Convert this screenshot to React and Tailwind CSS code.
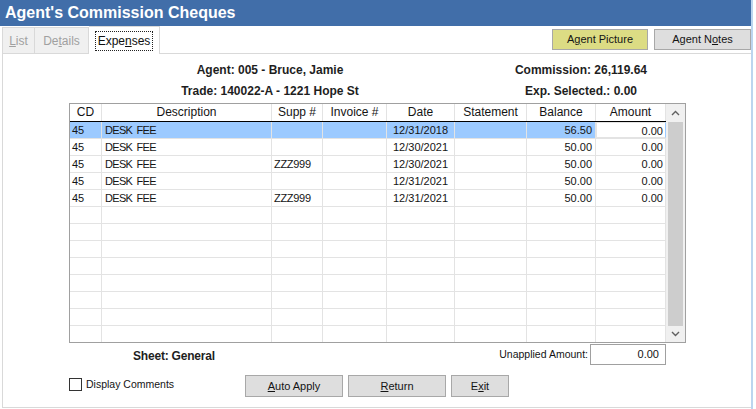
import React from "react";

const cols = [
  { key: "cd", label: "CD", w: "w-[32px]", align: "text-left pl-[2px]" },
  { key: "desc", label: "Description", w: "w-[170px]", align: "text-left pl-[3px] tracking-[-0.7px] [word-spacing:2px]" },
  { key: "supp", label: "Supp #", w: "w-[51px]", align: "text-left pl-[2px] tracking-[-0.3px]" },
  { key: "inv", label: "Invoice #", w: "w-[64px]", align: "text-left pl-[2px]" },
  { key: "date", label: "Date", w: "w-[68px]", align: "text-center" },
  { key: "stmt", label: "Statement", w: "w-[72px]", align: "text-left pl-[2px]" },
  { key: "bal", label: "Balance", w: "w-[69px]", align: "text-right pr-[3px]" },
  { key: "amt", label: "Amount", w: "w-[70px]", align: "text-right pr-[2px]" },
];

const data = [
  { cd: "45", desc: "DESK FEE", supp: "", inv: "", date: "12/31/2018", stmt: "", bal: "56.50", amt: "0.00" },
  { cd: "45", desc: "DESK FEE", supp: "", inv: "", date: "12/30/2021", stmt: "", bal: "50.00", amt: "0.00" },
  { cd: "45", desc: "DESK FEE", supp: "ZZZ999", inv: "", date: "12/30/2021", stmt: "", bal: "50.00", amt: "0.00" },
  { cd: "45", desc: "DESK FEE", supp: "", inv: "", date: "12/31/2021", stmt: "", bal: "50.00", amt: "0.00" },
  { cd: "45", desc: "DESK FEE", supp: "ZZZ999", inv: "", date: "12/31/2021", stmt: "", bal: "50.00", amt: "0.00" },
];

const rows = Array.from({ length: 13 }, (_, i) => data[i] || null);

function Chevron({ down }) {
  return (
    <svg width="9" height="6" viewBox="0 0 9 6" className="block">
      <path
        d={down ? "M1 1 L4.5 4.5 L8 1" : "M1 5 L4.5 1.5 L8 5"}
        fill="none"
        stroke="#606060"
        strokeWidth="1.4"
      />
    </svg>
  );
}

export default function App() {
  return (
    <div className="w-[756px] h-[409px] bg-white flex font-['Liberation_Sans',Arial,sans-serif] text-[#141414] overflow-hidden">
      <div className="w-[751px] flex flex-col">
        {/* Title bar */}
        <div className="h-[26px] bg-[#416ea9] flex items-center pl-[5px] shrink-0">
          <span className="text-white font-bold text-[16px] leading-none">Agent's Commission Cheques</span>
        </div>

        {/* Tab row */}
        <div className="h-[27px] flex items-end pl-[2px] shrink-0 relative z-10">
          <div className="h-[26px] w-[33px] bg-[#f0f0f0] border border-b-0 border-[#d9d9d9] flex items-center justify-center text-[12px] text-[#a0a0a0]">
            <span><span className="underline">L</span>ist</span>
          </div>
          <div className="h-[26px] w-[54px] bg-[#f0f0f0] border border-b-0 border-l-0 border-[#d9d9d9] flex items-center justify-center text-[12px] text-[#a0a0a0]">
            <span>De<span className="underline">t</span>ails</span>
          </div>
          <div className="h-[28px] w-[71px] -mb-px bg-white border border-b-0 border-l-0 border-[#d9d9d9] flex items-center justify-center text-[12px] text-[#101010] self-end">
            <span className="outline outline-1 outline-dotted outline-[#222] px-[2px] py-[2px] leading-[14px]">
              Expe<span className="underline">n</span>ses
            </span>
          </div>
          <div className="ml-auto self-start mt-[3px] flex gap-[6px] text-[11px]">
            <div className="w-[96px] h-[21px] bg-[#dcdc84] border border-[#a8a8a8] flex items-center justify-center">
              <span>A<span className="underline">g</span>ent Picture</span>
            </div>
            <div className="w-[97px] h-[21px] bg-[#dedede] border border-[#a8a8a8] flex items-center justify-center">
              <span>Agent N<span className="underline">o</span>tes</span>
            </div>
          </div>
        </div>

        {/* Panel */}
        <div className="flex-1 ml-[2px] mb-[1px] border border-r-0 border-[#d9d9d9] flex flex-col">
          {/* Info */}
          <div className="pt-[5px] pl-[66px] flex text-[12px] font-bold text-[#1e1e1e]">
            <div className="w-[402px] flex flex-col items-center">
              <div className="h-[21px] flex items-center">Agent: 005 - Bruce, Jamie</div>
              <div className="h-[21px] flex items-center">Trade: 140022-A - 1221 Hope St</div>
            </div>
            <div className="w-[220px] flex flex-col items-center">
              <div className="h-[21px] flex items-center">Commission: 26,119.64</div>
              <div className="h-[21px] flex items-center">Exp. Selected.: 0.00</div>
            </div>
          </div>

          {/* Table */}
          <div className="ml-[66px] mt-[2px] w-[617px] border border-[#a0a0a0] flex">
            <div className="w-[596px] flex flex-col">
              <div className="h-[18px] flex border-b border-[#000]">
                {cols.map((c) => (
                  <div
                    key={c.key}
                    className={`${c.w} h-[17px] border-r border-[#e3e3e3] text-[12px] leading-[17px] text-center`}
                  >
                    {c.label}
                  </div>
                ))}
              </div>
              {rows.map((r, i) => {
                const sel = i === 0;
                return (
                  <div
                    key={i}
                    className={`h-[17px] flex border-b border-[#e3e3e3] last:border-b-0 last:h-[16px] ${sel ? "bg-[#9ccaff]" : ""}`}
                  >
                    {cols.map((c) => {
                      const isAmtSel = sel && c.key === "amt";
                      return (
                        <div
                          key={c.key}
                          className={`${c.w} h-full border-r border-[#e3e3e3] text-[11px] leading-[16px] whitespace-nowrap overflow-hidden ${c.align} ${isAmtSel ? "bg-white border border-[#9ccaff] border-r-[#9ccaff]" : ""}`}
                        >
                          {r ? r[c.key] : ""}
                        </div>
                      );
                    })}
                  </div>
                );
              })}
            </div>
            {/* Scrollbar */}
            <div className="w-[19px] bg-[#f0f0f0] flex flex-col items-center">
              <div className="h-[18px] w-full flex items-center justify-center">
                <Chevron />
              </div>
              <div className="flex-1 w-[15px] bg-[#cdcdcd]" />
              <div className="h-[16px] w-full flex items-center justify-center">
                <Chevron down />
              </div>
            </div>
          </div>

          {/* Sheet / Unapplied */}
          <div className="ml-[66px] mt-[1px] w-[617px] h-[21px] flex items-center">
            <div className="pl-[64px] font-bold text-[12px] tracking-[-0.2px] text-[#1e1e1e] mt-[2px]">Sheet: General</div>
            <div className="ml-auto text-[10.5px]">Unapplied Amount:</div>
            <div className="ml-[2px] mr-[20px] w-[76px] h-[21px] border border-[#a0a0a0] flex items-center justify-end pr-[6px] text-[11px]">
              0.00
            </div>
          </div>

          {/* Bottom row */}
          <div className="ml-[66px] mt-[10px] flex items-start text-[11px]">
            <div className="w-[176px] flex items-center mt-[2px] gap-[4px]">
              <div className="w-[13px] h-[13px] border border-[#333] bg-white" />
              <span className="text-[10.5px]">Display Comments</span>
            </div>
            <div className="flex gap-[5px]">
              <div className="w-[98px] h-[22px] bg-[#dedede] border border-[#a8a8a8] flex items-center justify-center">
                <span><span className="underline">A</span>uto Apply</span>
              </div>
              <div className="w-[98px] h-[22px] bg-[#dedede] border border-[#a8a8a8] flex items-center justify-center">
                <span><span className="underline">R</span>eturn</span>
              </div>
              <div className="w-[58px] h-[22px] bg-[#dedede] border border-[#a8a8a8] flex items-center justify-center">
                <span>E<span className="underline">x</span>it</span>
              </div>
            </div>
          </div>
        </div>
      </div>
      <div className="w-[2px] bg-[#bcd5ef]" />
      <div className="flex-1 bg-white" />
    </div>
  );
}
